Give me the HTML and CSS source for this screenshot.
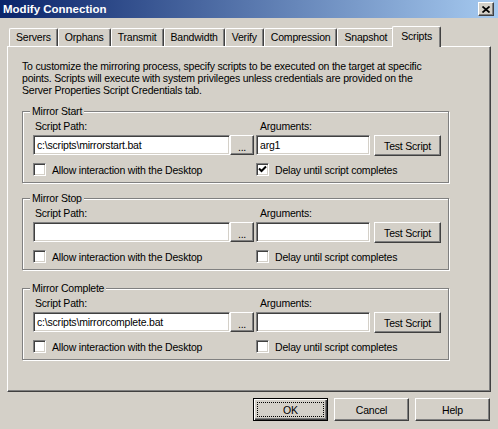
FILE: index.html
```html
<!DOCTYPE html>
<html lang="en">
<head>
  <meta charset="UTF-8" />
  <title>Modify Connection</title>
  <link rel="stylesheet" href="styles.css">
</head>
<body>

  <div class="dialog">

    <!-- Title bar -->
    <div class="titlebar">
      <span class="title">Modify Connection</span>
      <span class="close">
        <svg width="8" height="7" viewBox="0 0 8 7"><path d="M0.5 0.5 L7.5 6.5 M7.5 0.5 L0.5 6.5" stroke="#000" stroke-width="1.7" fill="none"/></svg>
      </span>
    </div>

    <!-- Tab strip -->
    <div class="tabs">
      <span class="tab">Servers</span>
      <span class="tab">Orphans</span>
      <span class="tab">Transmit</span>
      <span class="tab">Bandwidth</span>
      <span class="tab">Verify</span>
      <span class="tab">Compression</span>
      <span class="tab">Snapshot</span>
      <span class="tab active">Scripts</span>
    </div>

    <!-- Scripts page -->
    <div class="panel">
      <p class="intro">To customize the mirroring process, specify scripts to be executed on the target at specific points. Scripts will execute with system privileges unless credentials are provided on the Server Properties Script Credentials tab.</p>

      <div class="group">
        <span class="group-title">Mirror Start</span>
        <div class="grid">
          <span class="label">Script Path:</span>
          <span class="label">Arguments:</span>
          <span></span>
          <div class="path-field">
            <div class="edit path">c:\scripts\mirrorstart.bat</div>
            <span class="btn browse">...</span>
          </div>
          <div class="edit args">arg1</div>
          <span class="btn test">Test Script</span>
          <label class="check"><span class="box"></span>Allow interaction with the Desktop</label>
          <label class="check"><span class="box"><svg width="9" height="9" viewBox="0 0 9 9"><path d="M1 3.5 L3.5 6 L8 1.5" stroke="#000" stroke-width="2" fill="none"/></svg></span>Delay until script completes</label>
        </div>
      </div>

      <div class="group">
        <span class="group-title">Mirror Stop</span>
        <div class="grid">
          <span class="label">Script Path:</span>
          <span class="label">Arguments:</span>
          <span></span>
          <div class="path-field">
            <div class="edit path"></div>
            <span class="btn browse">...</span>
          </div>
          <div class="edit args"></div>
          <span class="btn test">Test Script</span>
          <label class="check"><span class="box"></span>Allow interaction with the Desktop</label>
          <label class="check"><span class="box"></span>Delay until script completes</label>
        </div>
      </div>

      <div class="group last">
        <span class="group-title">Mirror Complete</span>
        <div class="grid">
          <span class="label">Script Path:</span>
          <span class="label">Arguments:</span>
          <span></span>
          <div class="path-field">
            <div class="edit path">c:\scripts\mirrorcomplete.bat</div>
            <span class="btn browse">...</span>
          </div>
          <div class="edit args"></div>
          <span class="btn test">Test Script</span>
          <label class="check"><span class="box"></span>Allow interaction with the Desktop</label>
          <label class="check"><span class="box"></span>Delay until script completes</label>
        </div>
      </div>
    </div>

    <!-- Dialog buttons -->
    <div class="actions">
      <span class="btn action default"><span class="focus">OK</span></span>
      <span class="btn action">Cancel</span>
      <span class="btn action">Help</span>
    </div>

  </div>

</body>
</html>
```

FILE: styles.css
```css
/* Classic Windows dialog look */
body {
  margin: 0;
  padding: 0;
  background-color: #d4d0c8;
  font-family: "Liberation Sans", Arial, sans-serif;
  font-size: 10.5px;
  letter-spacing: -0.2px;
  color: #000;
}

.dialog {
  width: 498px;
  height: 429px;
  background-color: #d4d0c8;
}

/* Title bar */
.titlebar {
  height: 18px;
  display: flex;
  align-items: center;
  justify-content: space-between;
  padding: 0 4px 0 3px;
  background: linear-gradient(to right, #0a246a, #a6caf0);
}

.title {
  color: #fff;
  font-weight: bold;
  font-size: 11.5px;
  letter-spacing: 0;
}

.close {
  width: 14px;
  height: 12px;
  display: flex;
  align-items: center;
  justify-content: center;
  background-color: #d4d0c8;
  border: 1px solid;
  border-color: #fff #404040 #404040 #fff;
  box-shadow: inset -1px -1px 0 #808080;
}

/* Tabs */
.tabs {
  display: flex;
  align-items: flex-end;
  height: 20px;
  margin-top: 8px;
  padding-left: 9px;
  position: relative;
  z-index: 1;
}

.tab {
  height: 17px;
  line-height: 17px;
  padding: 0 6px;
  border: 1px solid;
  border-bottom: none;
  border-color: #fff #404040 #fff #fff;
  box-shadow: inset -1px 0 0 #808080;
  border-radius: 2px 2px 0 0;
  background-color: #d4d0c8;
  white-space: nowrap;
}

.tab.active {
  height: 20px;
  line-height: 18px;
  margin: 0 -2px -1px -2px;
  padding: 0 8px;
}

/* Tab page */
.panel {
  box-sizing: border-box;
  width: 484px;
  height: 346px;
  margin-left: 7px;
  padding: 13px 0 0 14px;
  border: 1px solid;
  border-color: #fff #404040 #404040 #fff;
  box-shadow: inset -1px -1px 0 #808080;
}

.intro {
  margin: 0;
  width: 420px;
  line-height: 12px;
}

/* Group boxes */
.group {
  width: 427px;
  margin-top: 15px;
  padding: 0 9px 5px 10px;
  box-sizing: border-box;
  border: 1px solid #808080;
  box-shadow: 1px 1px 0 #fff, inset 1px 1px 0 #fff;
}

.group + .group {
  margin-top: 15px;
}

.group.last {
  margin-top: 18px;
}

.group-title {
  display: block;
  width: fit-content;
  margin: -7px 0 0 -3px;
  padding: 0 2px;
  line-height: 13px;
  background-color: #d4d0c8;
}

.grid {
  display: grid;
  grid-template-columns: 221px 114px 67px;
  column-gap: 2px;
  margin-top: 2px;
}

.label {
  line-height: 13px;
  padding-left: 2px;
  margin-bottom: 2px;
}

.grid .label:nth-child(2) {
  padding-left: 4px;
}

.path-field {
  display: flex;
}

.edit {
  box-sizing: border-box;
  height: 20px;
  line-height: 18px;
  padding: 0 3px;
  background-color: #fff;
  border: 1px solid;
  border-color: #808080 #fff #fff #808080;
  box-shadow: inset 1px 1px 0 #404040, inset -1px -1px 0 #d4d0c8;
  white-space: nowrap;
  overflow: hidden;
}

.edit.path {
  width: 197px;
}

/* Push buttons */
.btn {
  box-sizing: border-box;
  display: flex;
  align-items: center;
  justify-content: center;
  background-color: #d4d0c8;
  border: 1px solid;
  border-color: #fff #404040 #404040 #fff;
  box-shadow: inset -1px -1px 0 #808080;
}

.browse {
  width: 24px;
  height: 20px;
  padding-top: 3px;
}

.test {
  width: 67px;
  height: 21px;
  margin-left: 2px;
}

/* Check boxes */
.check {
  display: flex;
  align-items: center;
  margin-top: 6px;
  height: 15px;
  white-space: nowrap;
}

.box {
  box-sizing: border-box;
  flex: none;
  width: 13px;
  height: 13px;
  margin-right: 6px;
  display: flex;
  align-items: center;
  justify-content: center;
  background-color: #fff;
  border: 1px solid;
  border-color: #808080 #fff #fff #808080;
  box-shadow: inset 1px 1px 0 #404040, inset -1px -1px 0 #d4d0c8;
}

/* Bottom buttons */
.actions {
  display: flex;
  justify-content: flex-end;
  gap: 6px;
  margin-top: 6px;
  padding-right: 8px;
}

.action {
  width: 75px;
  height: 23px;
}

.action.default {
  border: 1px solid #000;
  box-shadow: inset 1px 1px 0 #fff, inset -1px -1px 0 #404040, inset -2px -2px 0 #808080;
}

.focus {
  box-sizing: border-box;
  width: 67px;
  height: 15px;
  display: flex;
  align-items: center;
  justify-content: center;
  border: 1px dotted #000;
}
```
